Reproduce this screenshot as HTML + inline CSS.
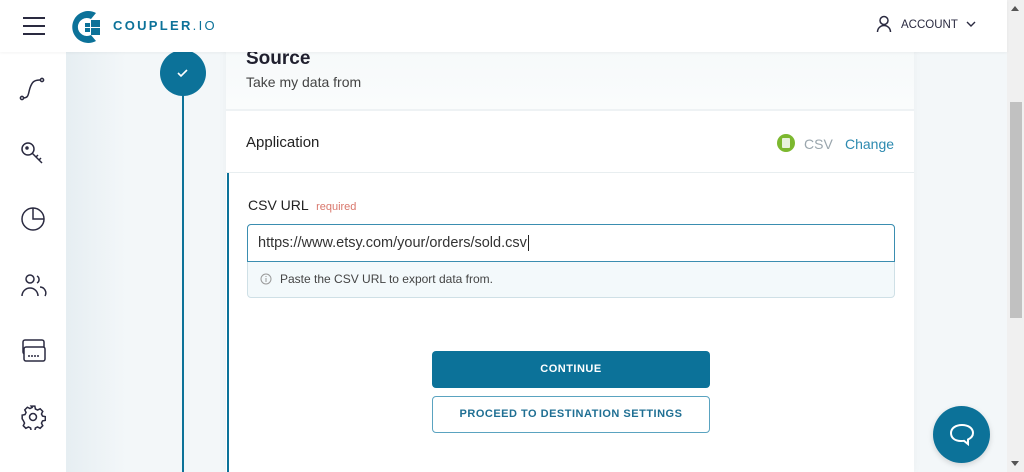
<!DOCTYPE html>
<html><head><style>
*{box-sizing:border-box;margin:0;padding:0}
body{width:1024px;height:472px;overflow:hidden;position:relative;font-family:"Liberation Sans",sans-serif;background:#f2f7f9;color:#2a2a3a}
.hdr{position:absolute;left:0;top:0;width:1007px;height:52px;background:#fff;z-index:5;box-shadow:0 1px 3px rgba(0,0,0,.05)}
.side{position:absolute;left:0;top:52px;width:66px;height:420px;background:#fff}
.main{position:absolute;left:66px;top:52px;width:941px;height:420px;background:linear-gradient(90deg,#e6eef2 0,#f3f7f9 60px,#f3f7f9 100%)}
.card{position:absolute;left:226px;top:0;width:688px;height:472px;background:#fff;box-shadow:0 0 8px rgba(0,0,0,.04)}
.sb{position:absolute;left:1007px;top:0;width:17px;height:472px;background:#f0f0f0}
.thumb{position:absolute;left:1010px;top:102px;width:12px;height:216px;background:#c1c1c1}
svg{position:absolute}
.t{position:absolute;white-space:nowrap}
</style></head><body>
<div class="main"></div>
<div class="side"></div>
<div class="card"></div>
<div style="position:absolute;left:226px;top:0;width:688px;height:111px;background:linear-gradient(180deg,#f3f7f9,#fafcfc);border-bottom:2px solid #eef2f4"></div>
<div style="position:absolute;left:226px;top:172px;width:688px;height:1px;background:#e8eef0"></div>
<div style="position:absolute;left:227px;top:173px;width:2px;height:299px;background:#0c7299"></div>
<div style="position:absolute;left:182px;top:72px;width:2px;height:400px;background:#0c7299"></div>
<div style="position:absolute;left:160px;top:50px;width:46px;height:46px;border-radius:50%;background:#0c7299"></div>
<svg style="left:175px;top:66px" width="16" height="14"><path d="M3 7l3 3 6-6" stroke="#fff" stroke-width="1.6" fill="none"/></svg>
<div class="t" style="left:246px;top:48px;font-size:19px;font-weight:bold;color:#1f1f2e">Source</div>
<div class="t" style="left:246px;top:74px;font-size:14px;color:#444">Take my data from</div>
<div class="t" style="left:246px;top:134px;font-size:15px;color:#222">Application</div>
<div style="position:absolute;left:777px;top:134px;width:18px;height:18px;border-radius:50%;background:#7cb82f"></div>
<div style="position:absolute;left:782px;top:138px;width:8px;height:10px;background:#e8f2dc;border-radius:1px"></div>
<div class="t" style="left:804px;top:136px;font-size:14px;color:#9aa6ad">CSV</div>
<div class="t" style="left:845px;top:136px;font-size:14px;color:#2d8ab0">Change</div>
<div class="t" style="left:248px;top:197px;font-size:14px;color:#222">CSV URL <span style="font-size:11px;color:#d9776c;margin-left:4px">required</span></div>
<div style="position:absolute;left:247px;top:224px;width:648px;height:74px;border:1px solid #cfe0e6;border-radius:4px;background:#f3f9fb"></div>
<div style="position:absolute;left:247px;top:224px;width:648px;height:38px;border:1px solid #3a8db0;border-radius:4px 4px 0 0;background:#fff"></div>
<div class="t" style="left:258px;top:235px;font-size:14.5px;color:#333">https://www.etsy.com/your/orders/sold.csv<span style="border-left:1px solid #222;margin-left:1px"></span></div>
<svg style="left:260px;top:273px" width="12" height="12"><circle cx="6" cy="6" r="5" stroke="#999" fill="none"/><path d="M6 5v4M6 3v1" stroke="#999"/></svg>
<div class="t" style="left:280px;top:272px;font-size:12px;color:#444">Paste the CSV URL to export data from.</div>
<div style="position:absolute;left:432px;top:351px;width:278px;height:37px;background:#0c7299;border-radius:4px;color:#fff;font-size:11px;font-weight:bold;text-align:center;line-height:37px;letter-spacing:.5px">CONTINUE</div>
<div style="position:absolute;left:432px;top:396px;width:278px;height:37px;border:1px solid #5aa3c0;border-radius:4px;color:#1f6f93;font-size:11px;font-weight:bold;text-align:center;line-height:35px;letter-spacing:.5px;background:#fff">PROCEED TO DESTINATION SETTINGS</div>
<div class="hdr"></div>
<svg style="left:22px;top:16px;z-index:6" width="24" height="20"><path d="M1 2h22M1 10h22M1 18h22" stroke="#2a2a40" stroke-width="2"/></svg>
<svg style="left:68px;top:9px;z-index:6" width="36" height="36" viewBox="0 0 36 36"><path d="M28 4A16 16 0 1 0 28 32L23 26A9 9 0 1 1 23 10Z" fill="#0c7299"/><rect x="17" y="14" width="5" height="4" fill="#0c7299"/><rect x="23" y="11" width="9" height="7" fill="#0c7299"/><rect x="17" y="19" width="5" height="4" fill="#0c7299"/><rect x="23" y="19" width="9" height="7" fill="#0c7299"/></svg>
<div class="t" style="left:113px;top:18px;font-size:13px;letter-spacing:2.3px;color:#0c7299;z-index:6;font-weight:bold">COUPLER<span style="font-weight:normal">.IO</span></div>
<svg style="left:876px;top:15px;z-index:6" width="16" height="18"><circle cx="8" cy="5.5" r="4" stroke="#2a2a40" stroke-width="1.5" fill="none"/><path d="M1.5 17a6.5 6.5 0 0 1 13 0" stroke="#2a2a40" stroke-width="1.5" fill="none"/></svg>
<div class="t" style="left:901px;top:19px;font-size:11.5px;color:#2a2a40;z-index:6">ACCOUNT</div>
<svg style="left:966px;top:21px;z-index:6" width="10" height="7"><path d="M1 1l4 4 4-4" stroke="#2a2a40" stroke-width="1.4" fill="none"/></svg>
<svg style="left:18px;top:74px" width="28" height="30" fill="none" stroke="#2a2a40" stroke-width="1.5"><path d="M5 24C11 24 10 20 12 14S16 6 22 6"/><circle cx="4" cy="24" r="1.6"/><circle cx="24" cy="6" r="1.6"/></svg>
<svg style="left:20px;top:141px" width="26" height="26" fill="none" stroke="#2a2a40" stroke-width="1.5"><circle cx="8" cy="8" r="6"/><circle cx="7" cy="7" r="1" fill="#2a2a40"/><path d="M12 12l10 10M16 16l2-2M19 19l2-2"/></svg>
<svg style="left:20px;top:206px" width="26" height="26" fill="none" stroke="#2a2a40" stroke-width="1.5"><circle cx="13" cy="13" r="11"/><path d="M13 2v11h11"/></svg>
<svg style="left:20px;top:272px" width="28" height="26" fill="none" stroke="#2a2a40" stroke-width="1.5"><circle cx="10" cy="7" r="4"/><path d="M2 24a8 8 0 0 1 16 0M17 4a4 4 0 0 1 0 7M20 15a6 6 0 0 1 5 9"/></svg>
<svg style="left:21px;top:339px" width="26" height="24" fill="none" stroke="#2a2a40" stroke-width="1.5"><rect x="2" y="1" width="21" height="14" rx="2"/><rect x="3" y="8" width="21" height="14" rx="2" fill="#fff"/><path d="M7 17h12" stroke-dasharray="2 1"/></svg>
<svg style="left:20px;top:404px" width="26" height="26" viewBox="0 0 24 24" fill="none" stroke="#2a2a40" stroke-width="1.4"><circle cx="12" cy="12" r="3.2"/><path d="M10.3 2h3.4l.5 2.6 2 1 2.4-1.2 2.4 2.4-1.2 2.4 1 2 2.6.5v3.4l-2.6.5-1 2 1.2 2.4-2.4 2.4-2.4-1.2-2 1-.5 2.6h-3.4l-.5-2.6-2-1-2.4 1.2-2.4-2.4 1.2-2.4-1-2L2 13.7v-3.4l2.6-.5 1-2-1.2-2.4 2.4-2.4 2.4 1.2 2-1z"/></svg>
<div class="sb"></div><div class="thumb"></div>
<svg style="left:1011px;top:6px" width="9" height="6"><path d="M0 5h8L4 0z" fill="#555"/></svg>
<svg style="left:1011px;top:461px" width="9" height="6"><path d="M0 0h8L4 5z" fill="#555"/></svg>
<div style="position:absolute;left:933px;top:406px;width:57px;height:57px;border-radius:50%;background:#0c7299;box-shadow:0 2px 6px rgba(0,0,0,.15)"></div>
<svg style="left:948px;top:421px" width="28" height="28" fill="none" stroke="#fff" stroke-width="2"><path d="M14 4C8 4 3 7 3 12s4 8 10 8c1 0 2 0 3-.2L20 23v-4.5c3-1.4 5-3.8 5-6.5 0-5-5-8-11-8z"/></svg>
</body></html>
